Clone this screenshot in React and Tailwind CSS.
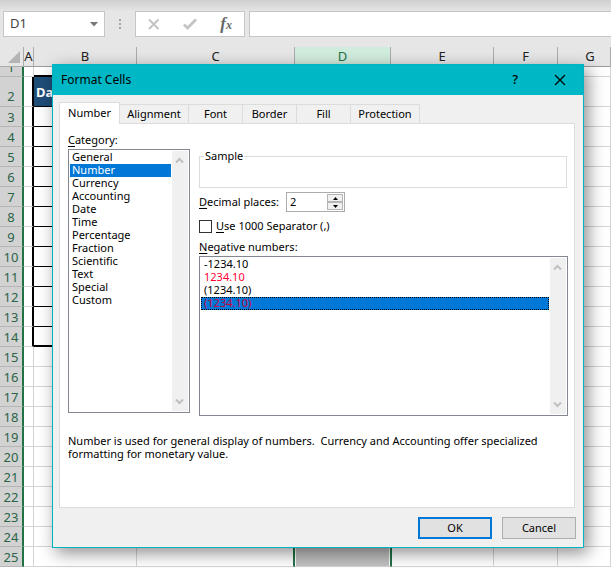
import React, { useState } from "react";
import clsx from "clsx";

const categories = [
  "General",
  "Number",
  "Currency",
  "Accounting",
  "Date",
  "Time",
  "Percentage",
  "Fraction",
  "Scientific",
  "Text",
  "Special",
  "Custom",
];

const negativeFormats = [
  { id: "minus", label: "-1234.10", red: false },
  { id: "red", label: "1234.10", red: true },
  { id: "parens", label: "(1234.10)", red: false },
  { id: "red-parens", label: "(1234.10)", red: true },
];

const tabs = [
  { label: "Alignment", width: "w-[69px]" },
  { label: "Font", width: "w-[54px]" },
  { label: "Border", width: "w-[54px]" },
  { label: "Fill", width: "w-[54px]" },
  { label: "Protection", width: "w-[69px]" },
];

const description =
  "Number is used for general display of numbers.\u00a0 Currency and Accounting offer specialized formatting for monetary value.";

const columns = ["A", "B", "C", "D", "E", "F", "G"];
const columnWidths = ["w-[10px]", "w-[103px]", "w-[158px]", "w-[96px]", "w-[103px]", "w-[64px]", ""];
const rows = Array.from({ length: 25 }, (_, i) => i + 1);

function FormulaBar() {
  return (
    <header className="flex h-[47px] items-start bg-linear-to-b from-[#cfcfcf] to-[#e6e6e6] to-25% pt-[11px] pl-[3px]">
      <div className="flex h-[26px] w-[102px] items-center border border-[#c6c6c6] bg-white">
        <input
          aria-label="Name box"
          defaultValue="D1"
          className="w-full min-w-0 bg-transparent pl-[6px] text-[13px] text-[#444] outline-none"
        />
        <button aria-label="Name list" className="pr-[6px]">
          <svg width="8" height="5" viewBox="0 0 8 5">
            <path d="M0 0h8L4 4.500z" fill="#777" />
          </svg>
        </button>
      </div>
      <svg className="mx-[14px] mt-[7px]" width="2" height="12" viewBox="0 0 2 12" fill="#a6a6a6">
        <rect width="2" height="2" y="1" />
        <rect width="2" height="2" y="5" />
        <rect width="2" height="2" y="9" />
      </svg>
      <div className="flex h-[26px] w-[110px] shrink-0 items-center justify-between border border-[#c6c6c6] bg-white px-3">
        <button aria-label="Cancel entry">
          <svg width="12" height="12" viewBox="0 0 12 12" fill="none" stroke="#c4c4c4" strokeWidth="2">
            <path d="M1 1.500l9.500 9.500M10.500 1.500L1 11" />
          </svg>
        </button>
        <button aria-label="Enter">
          <svg width="14" height="12" viewBox="0 0 14 12" fill="none" stroke="#c4c4c4" strokeWidth="2.800">
            <path d="M1 6.500l3.500 3.500L13 1.500" />
          </svg>
        </button>
        <button
          aria-label="Insert function"
          className="font-['Liberation_Serif',serif] text-[17px] leading-5 font-bold text-[#666] italic"
        >
          f<span className="text-[12px]">x</span>
        </button>
      </div>
      <input
        aria-label="Formula"
        className="ml-1 h-[26px] min-w-0 flex-1 border border-r-0 border-[#c6c6c6] bg-white px-2 text-[13px] outline-none"
      />
    </header>
  );
}

function cellClass(row, col) {
  const inTable = row >= 2 && row <= 14;
  const framed = col === "B" && inTable;
  return clsx(
    "h-5 p-0",
    col === "A" && inTable && "border-r-2 border-r-black",
    col === "C" && "border-r-2 border-r-[#217346]",
    col === "D" &&
      "border-r border-r-[#217346] bg-[#c0c0c0] shadow-[inset_1px_0_#fff,inset_-1px_0_#fff]",
    col === "E" && "border-l border-l-[#217346]",
    (col === "A" && inTable) || col === "C" || col === "D" ? "" : "border-r border-r-[#d4d4d4]",
    col === "B" && (row === 1 || row === 14)
      ? "border-b-2 border-b-black"
      : framed
        ? "border-b border-b-black"
        : "border-b border-b-[#d4d4d4]",
    framed && row === 2 && "bg-[#1f4e79] pl-[2px] text-left text-[13px] font-bold text-white",
  );
}

function Sheet() {
  return (
    <table className="w-full table-fixed border-separate border-spacing-0 bg-white">
      <colgroup>
        <col className="w-[24px]" />
        {columns.map((c, i) => (
          <col key={c} className={columnWidths[i]} />
        ))}
      </colgroup>
      <thead>
        <tr className="text-[13px] leading-4">
          <th className="h-5 border-r border-b border-[#ababab] bg-[#e6e6e6] p-0">
            <svg className="ml-auto mr-[3px] block" width="12" height="12" viewBox="0 0 12 12">
              <path d="M12 0v12H0z" fill="#b4b4b4" />
            </svg>
          </th>
          {columns.map((c) => (
            <th
              key={c}
              className={clsx(
                "h-5 border-r border-b border-r-[#ababab] border-b-[#9b9b9b] pt-0 pr-0 pb-[2px] font-normal",
                c === "G" ? "pl-3" : "pl-0",
                c === "D" ? "bg-[#d0ecdc] text-[#217346]" : "bg-[#e6e6e6] text-[#222]",
              )}
            >
              {c}
            </th>
          ))}
        </tr>
      </thead>
      <tbody>
        {rows.map((r) => (
          <tr key={r} className="text-[13px] leading-[18px]">
            <th
              className={clsx(
                "border-r-2 border-b border-r-[#217346] border-b-[#b5b5b5] bg-[#d2d2d2] p-0 font-normal text-[#2a6447]",
                r === 1 ? "h-[10px]" : r === 2 ? "h-[30px] pt-2" : "h-5",
              )}
            >
              {r === 1 ? (
                <div className="flex h-[9px] items-end justify-center overflow-hidden">
                  <span className="h-[14px] leading-[10px]">1</span>
                </div>
              ) : (
                r
              )}
            </th>
            {columns.map((c) => (
              <td key={c} className={clsx(cellClass(r, c), r === 1 && "h-[10px]!")}>
                {r === 2 && c === "B" ? "Date" : null}
              </td>
            ))}
          </tr>
        ))}
      </tbody>
    </table>
  );
}

function Chevron({ down }) {
  return (
    <svg width="9" height="7" viewBox="0 0 9 7" fill="none" stroke="#bfbfbf" strokeWidth="2">
      <path d={down ? "M1 1.500l3.500 3.500L8 1.500" : "M1 5.500l3.500-3.500L8 5.500"} />
    </svg>
  );
}

function ScrollTrack() {
  return (
    <div className="flex w-4 shrink-0 flex-col items-center justify-between bg-[#f0f0f0] py-[6px] pr-[1px]">
      <Chevron />
      <Chevron down />
    </div>
  );
}

function Hot({ text }) {
  return (
    <>
      <span className="underline underline-offset-2">{text[0]}</span>
      {text.slice(1)}
    </>
  );
}

const optionBase =
  "flex h-[13px] min-h-0 items-center pt-0 pr-0 pb-[2px] leading-[11px]! checked:bg-[#0078d7] checked:bg-linear-to-b checked:from-[#0078d7] checked:to-[#0078d7]";

function NumberPanel() {
  const [category, setCategory] = useState("Number");
  const [negative, setNegative] = useState("red-parens");
  return (
    <section className="mr-[1px] flex flex-1 flex-col border border-[#dcdcdc] bg-white pt-2 pr-[6px] pl-2">
      <div className="flex gap-[9px]">
        <div className="flex w-[122px] shrink-0 flex-col">
          <label htmlFor="category" className="mb-[1px] leading-4">
            <Hot text="Category:" />
          </label>
          <div className="flex h-[264px] border border-[#828790] p-[1px]">
            <select
              id="category"
              size={12}
              value={category}
              onChange={(e) => setCategory(e.target.value)}
              className="mr-[1px] h-full min-w-0 flex-1 appearance-none overflow-hidden bg-white p-0 outline-none"
            >
              {categories.map((c) => (
                <option key={c} value={c} className={clsx(optionBase, "pl-[2px] checked:text-white")}>
                  {c}
                </option>
              ))}
            </select>
            <ScrollTrack />
          </div>
        </div>
        <div className="flex min-w-0 flex-1 flex-col pt-4">
          <fieldset className="mr-[1px] h-[40px] border border-[#dcdcdc] px-1">
            <legend className="px-[1px] leading-4">Sample</legend>
          </fieldset>
          <div className="mt-1 flex h-5 items-center">
            <label htmlFor="decimals" className="w-[87px]">
              <Hot text="Decimal places:" />
            </label>
            <div className="flex h-5 w-[59px] border border-[#ababab] bg-white p-[1px]">
              <input id="decimals" defaultValue="2" className="min-w-0 flex-1 pl-[2px] outline-none" />
              <div className="flex w-4 flex-col">
                <button
                  aria-label="Increase"
                  className="flex flex-1 items-center justify-center border border-[#b5b5b5] bg-[#f0f0f0]"
                >
                  <svg width="5" height="3" viewBox="0 0 5 3">
                    <path d="M0 3h5L2.500 0z" />
                  </svg>
                </button>
                <button
                  aria-label="Decrease"
                  className="flex flex-1 items-center justify-center border border-[#b5b5b5] bg-[#f0f0f0]"
                >
                  <svg width="5" height="3" viewBox="0 0 5 3">
                    <path d="M0 0h5L2.500 3z" />
                  </svg>
                </button>
              </div>
            </div>
          </div>
          <label className="mt-[6px] flex h-4 items-center gap-1">
            <input type="checkbox" className="size-[13px] appearance-none border border-[#333] bg-white" />
            <span>
              <Hot text="Use 1000 Separator (,)" />
            </span>
          </label>
          <label htmlFor="negative" className="mt-[5px] mb-[1px] leading-4">
            <Hot text="Negative numbers:" />
          </label>
          <div className="flex h-[160px] border border-[#828790] p-[1px]">
            <select
              id="negative"
              size={4}
              value={negative}
              onChange={(e) => setNegative(e.target.value)}
              className="mr-[1px] h-full min-w-0 flex-1 appearance-none overflow-hidden bg-white p-0 outline-none"
            >
              {negativeFormats.map((f) => (
                <option
                  key={f.id}
                  value={f.id}
                  className={clsx(
                    optionBase,
                    "pl-[3px] checked:outline checked:-outline-offset-1 checked:outline-dotted checked:outline-black",
                    f.red ? "text-[#ff0030] checked:text-[#c80040]" : "text-black",
                  )}
                >
                  {f.label}
                </option>
              ))}
            </select>
            <ScrollTrack />
          </div>
        </div>
      </div>
      <p className="mt-[18px] leading-[13px]">{description}</p>
    </section>
  );
}

function FormatCellsDialog() {
  return (
    <div
      role="dialog"
      aria-label="Format Cells"
      className="absolute top-[64px] left-[52px] flex h-[484px] w-[532px] flex-col border border-[#00b2c2] bg-[#f0f0f0] text-[11px] text-black shadow-[4px_5px_16px_rgba(0,0,0,0.45)]"
    >
      <div className="flex h-[30px] shrink-0 items-center bg-[#00b7c6] pr-[17px] pl-2 text-[12px]">
        <h1 className="flex-1">Format Cells</h1>
        <button aria-label="Help" className="mr-9 text-[13px] font-medium">
          ?
        </button>
        <button aria-label="Close">
          <svg width="12" height="12" viewBox="0 0 12 12" stroke="#000" strokeWidth="1.200">
            <path d="M1 1l10 10M11 1L1 11" />
          </svg>
        </button>
      </div>
      <div className="flex flex-1 flex-col pt-[7px] pr-[7px] pb-2 pl-[6px]">
        <div role="tablist" className="flex items-end">
          <button
            role="tab"
            aria-selected="true"
            className="z-10 -mb-[1px] h-[22px] w-[61px] border border-b-0 border-[#dcdcdc] bg-white"
          >
            Number
          </button>
          {tabs.map((t) => (
            <button
              key={t.label}
              role="tab"
              aria-selected="false"
              className={clsx("h-[19px] border-t border-r border-[#dcdcdc]", t.width)}
            >
              {t.label}
            </button>
          ))}
        </div>
        <NumberPanel />
        <div className="mt-[9px] flex justify-end gap-[10px]">
          <button className="h-[22px] w-[74px] border-2 border-[#0078d7] bg-[#e1e1e1]">OK</button>
          <button className="h-[22px] w-[74px] border border-[#adadad] bg-[#e1e1e1]">Cancel</button>
        </div>
      </div>
    </div>
  );
}

export default function App() {
  return (
    <main className="relative h-screen overflow-hidden bg-white font-['Noto_Sans','Open_Sans',sans-serif]">
      <FormulaBar />
      <Sheet />
      <FormatCellsDialog />
    </main>
  );
}
